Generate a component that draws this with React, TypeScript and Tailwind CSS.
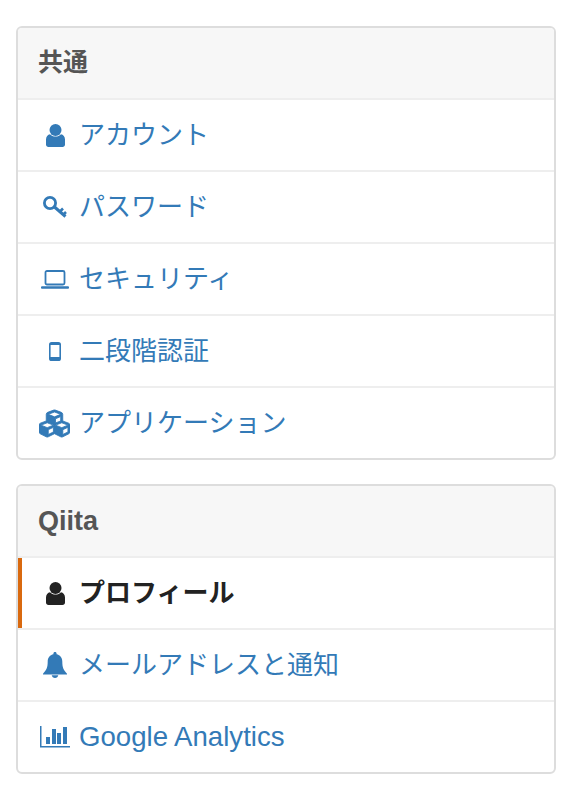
import type { ReactNode } from "react";
import { FaCubes } from "react-icons/fa";

const font = "[font-family:'Liberation_Sans','Noto_Sans_CJK_JP',sans-serif]";

function UserIcon() {
  return (
    <svg viewBox="0 0 19 23" className="h-[23px] w-[19px] fill-current">
      <circle cx="9.5" cy="6" r="6" />
      <path d="M0 20.5v-5C0 12.500 1.800 10.500 4 10.200c1.400 1.500 3.300 2.300 5.500 2.300s4.100-.8 5.500-2.300c2.200.3 4 2.300 4 5.300v5c0 1.500-1 2.500-2.500 2.500h-14C1 23 0 22 0 20.500z" />
    </svg>
  );
}

function KeyIcon() {
  return (
    <svg viewBox="0 0 24 22" className="h-[22px] w-[24px] fill-none stroke-current">
      <circle cx="7" cy="7" r="5.600" strokeWidth="2.800" />
      <path d="M11.500 11 L22.500 20.500" strokeWidth="3" />
      <path d="M17 15.500 L20 12.500 M20.500 18.500 L23 16" strokeWidth="2.600" />
    </svg>
  );
}

function LaptopIcon() {
  return (
    <svg viewBox="0 0 28 19" className="h-[19px] w-7 fill-none stroke-current">
      <rect x="4.500" y="1" width="19" height="13.500" rx="1.500" strokeWidth="1.800" />
      <path d="M1 17.500h26" strokeWidth="2.400" strokeLinecap="round" />
    </svg>
  );
}

function MobileIcon() {
  return (
    <svg viewBox="0 0 12 19" className="h-[19px] w-3">
      <rect width="12" height="19" rx="2.600" className="fill-current" />
      <rect x="1.600" y="3" width="8.800" height="12" className="fill-white" />
    </svg>
  );
}

function BellIcon() {
  return (
    <svg viewBox="0 0 24 26" className="h-[26px] w-6 fill-current">
      <path d="M12 0c1 0 1.600.7 1.600 1.700v.6C17 3 19.300 5.800 19.300 9.500c0 6 1.200 8.400 4.700 12.200v.8H0v-.8c3.500-3.800 4.700-6.200 4.700-12.200 0-3.700 2.300-6.500 5.700-7.200v-.6C10.400.7 11 0 12 0z" />
      <path d="M8.700 23.300h6.600c-.2 1.600-1.600 2.700-3.300 2.700s-3.100-1.100-3.300-2.700z" />
    </svg>
  );
}

function ChartIcon() {
  return (
    <svg viewBox="0 0 30 22" className="h-[22px] w-[30px] fill-current">
      <path d="M0 0h1.500v20H30v1.500H0z" />
      <rect x="6" y="11" width="4" height="7" />
      <rect x="12" y="3" width="4" height="15" />
      <rect x="17" y="7" width="4" height="11" />
      <rect x="23" y="1" width="4" height="17" />
    </svg>
  );
}

interface RowProps {
  icon: ReactNode;
  label: string;
  active?: boolean;
  labelClass?: string;
}

function Row({ icon, label, active, labelClass = "" }: RowProps) {
  return (
    <a
      className={`flex h-[72px] items-center border-t-2 border-[#eeeeee] ${
        active ? "font-bold text-[#222222]" : "text-[#337ab7]"
      }`}
    >
      <span className={`flex h-full w-[4px] shrink-0 ${active ? "bg-[#d9690f]" : ""}`} />
      <span className="flex w-[57px] shrink-0 justify-center pl-[9px]">{icon}</span>
      <span className={`leading-none ${labelClass}`}>{label}</span>
    </a>
  );
}

function Card({ title, titleClass, children }: { title: string; titleClass: string; children: ReactNode }) {
  return (
    <div className="overflow-hidden rounded-[6px] border-2 border-[#dddddd] bg-white">
      <div className={`flex h-[70px] items-center bg-[#f7f7f7] px-[20px] font-bold text-[#555555] ${titleClass}`}>
        {title}
      </div>
      {children}
    </div>
  );
}

export default function App() {
  return (
    <div className={`flex min-h-[786px] w-[578px] flex-col gap-[24px] bg-white pl-[16px] pr-[22px] pt-[26px] text-[26px] ${font}`}>
      <Card title="共通" titleClass="text-[25px]">
        <Row icon={<UserIcon />} label="アカウント" />
        <Row icon={<KeyIcon />} label="パスワード" />
        <Row icon={<LaptopIcon />} label="セキュリティ" />
        <Row icon={<MobileIcon />} label="二段階認証" />
        <Row icon={<FaCubes className="h-[31px] w-[31px] -translate-x-px stroke-[14px]" />} label="アプリケーション" />
      </Card>
      <Card title="Qiita" titleClass="text-[27px]">
        <Row icon={<UserIcon />} label="プロフィール" active />
        <Row icon={<BellIcon />} label="メールアドレスと通知" />
        <Row icon={<ChartIcon />} label="Google Analytics" labelClass="text-[27.6px]" />
      </Card>
    </div>
  );
}
